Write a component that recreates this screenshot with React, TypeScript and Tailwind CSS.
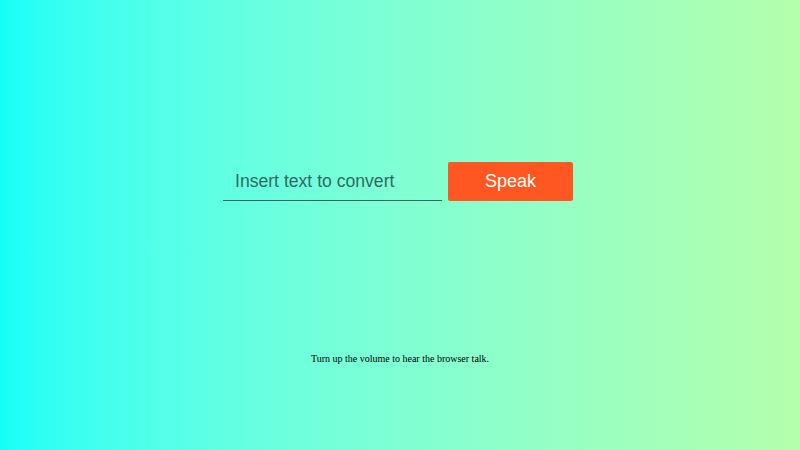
export default function App() {
  return (
    <div className="flex h-[450px] w-full flex-col items-center bg-gradient-to-r from-[#12fff7] to-[#b3ffab]">
      <div className="mt-[162px] flex items-end gap-[6px] pr-[4px]">
        <input
          type="text"
          placeholder="Insert text to convert"
          className="h-[39px] w-[219px] border-b border-[#2f6b63] bg-transparent px-[12px] pt-[1px] text-[17.6px] text-[#2f6b63] placeholder:text-[#2f6b63] outline-none font-['Liberation_Sans',sans-serif]"
        />
        <button className="h-[39px] w-[125px] rounded-[2px] bg-[#ff5722] text-[18px] text-white font-['Liberation_Sans',sans-serif]">
          Speak
        </button>
      </div>
      <p className="mt-[150px] text-[10px] leading-[15px] text-black font-['Liberation_Serif',serif]">
        Turn up the volume to hear the browser talk.
      </p>
    </div>
  )
}
